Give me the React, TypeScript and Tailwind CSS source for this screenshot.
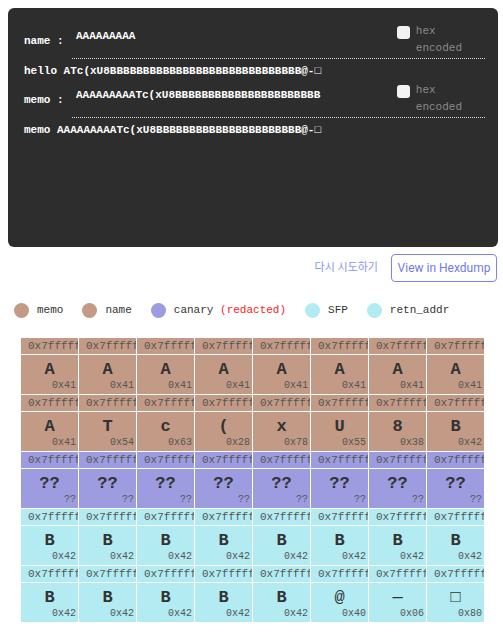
import React from 'react';

type Cell = { ch: string; hex: string; thin?: boolean };

const mono = "font-['Liberation_Mono','DejaVu_Sans_Mono',monospace]";

const repeat = (ch: string, hex: string, n: number): Cell[] =>
  Array.from({ length: n }, () => ({ ch, hex }));

const rows: { bg: string; base: number; cells: Cell[] }[] = [
  { bg: 'bg-[#c29a86]', base: 0xe3a0, cells: repeat('A', '0x41', 8) },
  {
    bg: 'bg-[#c29a86]',
    base: 0xe3a8,
    cells: [
      { ch: 'A', hex: '0x41' },
      { ch: 'T', hex: '0x54' },
      { ch: 'c', hex: '0x63' },
      { ch: '(', hex: '0x28' },
      { ch: 'x', hex: '0x78' },
      { ch: 'U', hex: '0x55' },
      { ch: '8', hex: '0x38' },
      { ch: 'B', hex: '0x42' },
    ],
  },
  { bg: 'bg-[#9d9ce0]', base: 0xe3b0, cells: repeat('??', '??', 8) },
  { bg: 'bg-[#b2ebf2]', base: 0xe3b8, cells: repeat('B', '0x42', 8) },
  {
    bg: 'bg-[#b2ebf2]',
    base: 0xe3c0,
    cells: [
      ...repeat('B', '0x42', 5),
      { ch: '@', hex: '0x40', thin: true },
      { ch: '—', hex: '0x06', thin: true },
      { ch: '□', hex: '0x80', thin: true },
    ],
  },
];

const legend = [
  { color: 'bg-[#c29a86]', label: 'memo' },
  { color: 'bg-[#c29a86]', label: 'name' },
  { color: 'bg-[#9d9ce0]', label: 'canary', extra: '(redacted)' },
  { color: 'bg-[#b2ebf2]', label: 'SFP' },
  { color: 'bg-[#b2ebf2]', label: 'retn_addr' },
];

const B22 = 'B'.repeat(22);
const B29 = 'B'.repeat(29);

const InputRow = ({ label, value }: { label: string; value: string }) => (
  <div className="flex h-[36px] items-center">
    <span className="w-[48px] shrink-0 font-bold text-white">{label}</span>
    <div className="flex h-[36px] flex-1 items-start border-b border-dotted border-[#dddddd]">
      <span className="flex-1 pl-[4px] pt-[6px] font-bold text-white">{value}</span>
      <div className="flex items-start gap-[6px] pr-[23px]">
        <span className="mt-[3px] h-[13px] w-[13px] rounded-[3px] bg-[#f2f2f5]" />
        <div className="flex flex-col leading-[17px] text-[#8a8a8a]">
          <span>hex</span>
          <span>encoded</span>
        </div>
      </div>
    </div>
  </div>
);

export default function App() {
  return (
    <div className="min-h-screen bg-white pt-[8px]">
      {/* Terminal panel */}
      <div
        className={`ml-[8px] mr-[5px] h-[239px] rounded-[6px] bg-[#2d2d2d] pl-[16px] pr-[13px] pt-[15px] text-[11px] leading-[14px] ${mono}`}
      >
        <InputRow label="name :" value="AAAAAAAAA" />
        <div className="flex h-[23px] items-center font-bold text-white">
          hello ATc(xU8{B29}@-□
        </div>
        <InputRow label="memo :" value={`AAAAAAAAATc(xU8${B22}`} />
        <div className="flex h-[23px] items-center font-bold text-white">
          memo AAAAAAAAATc(xU8{B22}@-□
        </div>
      </div>

      {/* Actions */}
      <div className="mt-[7px] flex items-center justify-end gap-[13px] pr-[6px] font-['Roboto','Noto_Sans_CJK_KR',sans-serif]">
        <span className="text-[11px] text-[#8c94f2]">다시 시도하기</span>
        <button className="h-[28px] w-[106px] rounded-[4px] border border-[#7c83ee] text-[12px] text-[#7379e8]">
          View in Hexdump
        </button>
      </div>

      {/* Legend */}
      <div className={`mt-[20px] flex h-[16px] items-center pl-[14px] text-[11px] text-[#333] ${mono}`}>
        {legend.map(l => (
          <div key={l.label} className="mr-[19px] flex items-center gap-[8px]">
            <span className={`h-[15px] w-[15px] rounded-full ${l.color}`} />
            <span>
              {l.label}
              {l.extra && <span className="text-[#ff1a1a]"> {l.extra}</span>}
            </span>
          </div>
        ))}
      </div>

      {/* Stack grid */}
      <div className={`ml-[21px] mt-[20px] flex w-[463px] flex-col gap-[1px] ${mono}`}>
        {rows.map((row, r) => (
          <div key={r} className="grid grid-cols-8 gap-[1px]">
            {row.cells.map((c, i) => (
              <div
                key={`a${i}`}
                className={`h-[16px] overflow-hidden whitespace-nowrap pl-[7px] text-[11px] leading-[16px] text-[#555] ${row.bg}`}
              >
                0x7fffffff{(row.base + i).toString(16)}
              </div>
            ))}
            {row.cells.map((c, i) => (
              <div key={`v${i}`} className={`flex h-[39px] flex-col ${row.bg}`}>
                <span
                  className={`pt-[5px] text-center text-[17px] leading-[20px] text-[#333] ${c.thin ? 'font-normal' : 'font-bold'}`}
                >
                  {c.ch}
                </span>
                <span className="pr-[2px] text-right text-[10px] leading-[12px] text-[#555]">{c.hex}</span>
              </div>
            ))}
          </div>
        ))}
      </div>
    </div>
  );
}
